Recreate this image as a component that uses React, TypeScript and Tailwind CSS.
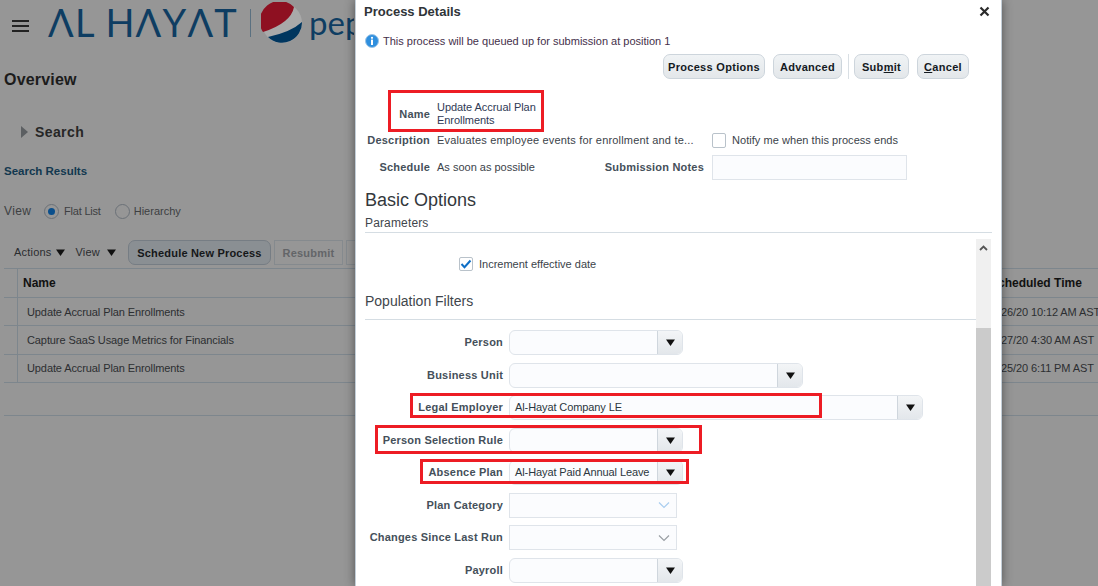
import React from "react";

const rows = [
  { name: "Update Accrual Plan Enrollments", time: "5/26/20 10:12 AM AST", h: "h-[28px]", lead: "leading-[28px]" },
  { name: "Capture SaaS Usage Metrics for Financials", time: "5/27/20 4:30 AM AST", h: "h-[29px]", lead: "leading-[28px]" },
  { name: "Update Accrual Plan Enrollments", time: "5/25/20 6:11 PM AST", h: "h-[28px]", lead: "leading-[26px]" },
];

const Arrow = () => (
  <svg width="9" height="7" viewBox="0 0 9 7" className="shrink-0">
    <path d="M0 0.5h9L4.5 7z" fill="#111" />
  </svg>
);

const Chevron = ({ color }: { color: string }) => (
  <svg width="12" height="8" viewBox="0 0 12 8" className="shrink-0">
    <path d="M1 1.5l5 5 5-5" fill="none" stroke={color} strokeWidth="1.2" />
  </svg>
);

const Dropdown = ({ label, value, width }: { label: string; value?: string; width: string }) => (
  <div className="flex items-center gap-[6px] h-[25px]">
    <span className="w-[138px] text-right font-bold text-[#45505a] tracking-[0.2px]">{label}</span>
    <div className={`flex h-[25px] ${width} border border-[#dfe4ea] rounded-[6px] bg-[#fbfcfe] overflow-hidden`}>
      <span className="flex-1 pl-[5px] leading-[23px] text-[#2b3740] tracking-[-0.1px] whitespace-nowrap">{value}</span>
      <span className="flex items-center justify-center w-[25px] border-l border-[#cfd6dd] bg-gradient-to-b from-[#f3f5f7] to-[#e3e7eb]">
        <Arrow />
      </span>
    </div>
  </div>
);

const PlainSelect = ({ label, color }: { label: string; color: string }) => (
  <div className="flex items-center gap-[6px] h-[25px]">
    <span className="w-[138px] text-right font-bold text-[#45505a] tracking-[0.2px] whitespace-nowrap">{label}</span>
    <div className="flex items-center justify-end pr-[6px] h-[25px] w-[168px] border border-[#dfe4ea] bg-[#fbfcfe]">
      <Chevron color={color} />
    </div>
  </div>
);

const ActionButton = ({ children, width }: { children: React.ReactNode; width: string }) => (
  <button className={`h-[25px] pt-[1px] ${width} rounded-[7px] border border-[#cdd5dc] bg-gradient-to-b from-[#f0f3f5] to-[#e3e7ea] font-bold text-[#141a1f] tracking-[0.3px] whitespace-nowrap`}>
    {children}
  </button>
);

export default function App() {
  return (
    <div className="relative w-[1098px] h-[586px] overflow-hidden bg-[#969696] font-['Liberation_Sans',Arial,sans-serif] text-[11px]">
      {/* page behind the dialog */}
      <main className="flex flex-col w-full h-full">
        <header className="flex items-center h-[46px] shrink-0">
          <div className="flex flex-col gap-[3px] mt-[6px] ml-[12px] w-[17px]">
            <span className="h-[2px] bg-[#222]"></span>
            <span className="h-[2px] bg-[#222]"></span>
            <span className="h-[2px] bg-[#222]"></span>
          </div>
          <span className="ml-[19px] mb-[2px] w-[192px] font-['Lato',sans-serif] text-[38px] leading-none tracking-[1.2px] text-[#0e3d62] whitespace-nowrap">
            ΛL HΛYΛT
          </span>
          <span className="ml-[10px] w-px h-[28px] bg-[#5a7080]"></span>
          <svg width="42" height="42" viewBox="0 0 42 42" className="ml-[10px] shrink-0">
            <circle cx="21" cy="21" r="20" fill="#a9a9a9" />
            <path d="M2 30A20 20 0 0 1 33 5Q30 21 2 30z" fill="#8e1021" />
            <path d="M7 35A20 20 0 0 0 41 20Q30 30 7 35z" fill="#00365f" />
          </svg>
          <div className="ml-[6px] w-[45px] overflow-hidden">
            <span className="font-['Lato',sans-serif] text-[33px] leading-none text-[#0e3d62]">pep</span>
          </div>
        </header>

        <h1 className="mt-[23px] ml-[4px] h-[22px] text-[16px] leading-[22px] font-bold text-[#1c1c1c] tracking-[0.2px]">Overview</h1>

        <div className="flex items-center mt-[31px] ml-[21px] h-[20px]">
          <svg width="7" height="12" viewBox="0 0 7 12">
            <path d="M0 0l7 6-7 6z" fill="#5c5f62" />
          </svg>
          <span className="ml-[7px] text-[14px] font-bold text-[#262626] tracking-[0.4px]">Search</span>
        </div>

        <h2 className="mt-[21px] ml-[4px] h-[16px] leading-[16px] font-bold text-[#12384f] text-[11.5px]">Search Results</h2>

        <div className="flex items-center mt-[24px] ml-[4px] h-[16px] text-[#3d3f42]">
          <span className="w-[28px] text-[12px] tracking-[0.4px]">View</span>
          <span className="flex items-center justify-center ml-[12px] w-[15px] h-[15px] rounded-full border border-[#6b7178]">
            <span className="w-[7px] h-[7px] rounded-full bg-[#0a4f8c]"></span>
          </span>
          <span className="ml-[5px] tracking-[-0.2px]">Flat List</span>
          <span className="ml-[14px] w-[15px] h-[15px] rounded-full border border-[#6b7178]"></span>
          <span className="ml-[4px]">Hierarchy</span>
        </div>

        <div className="flex items-center mt-[21px] ml-[14px] h-[25px] text-[#2a2c2f] tracking-[0.2px]">
          <span>Actions</span>
          <span className="ml-[5px]"><Arrow /></span>
          <span className="ml-[10px]">View</span>
          <span className="ml-[7px]"><Arrow /></span>
          <span className="flex items-center justify-center pt-[1px] ml-[12px] w-[143px] h-[25px] rounded-[7px] border border-[#767d84] bg-[#8a8f93] font-bold text-[#151719]">Schedule New Process</span>
          <span className="flex items-center justify-center pt-[1px] ml-[3px] w-[69px] h-[25px] border border-[#858a8e] font-bold text-[#636568]">Resubmit</span>
          <span className="ml-[3px] w-[20px] h-[25px] border border-[#858a8e]"></span>
        </div>

        {/* results table */}
        <div className="mt-[3px] ml-[4px] border-t border-[#7d868d]">
          <div className="flex h-[29px] border-b border-[#7d868d] text-[12px] font-bold text-[#111]">
            <span className="w-[14px] shrink-0 border-r border-[#7d868d]"></span>
            <span className="w-[972px] shrink-0 pl-[5px] leading-[28px]">Name</span>
            <span className="leading-[28px] whitespace-nowrap">Scheduled Time</span>
          </div>
          {rows.map((row) => (
            <div key={row.time} className={`flex ${row.h} ${row.lead} border-b border-[#7d868d] text-[#2c2e31] tracking-[-0.1px]`}>
              <span className="w-[14px] shrink-0 border-r border-[#7d868d]"></span>
              <span className="w-[974px] shrink-0 pl-[9px]">{row.name}</span>
              <span className="whitespace-nowrap">{row.time}</span>
            </div>
          ))}
        </div>
        <div className="mt-[32px] ml-[4px] border-t border-[#7d868d]"></div>
      </main>

      {/* Process Details dialog */}
      <section className="absolute left-[355px] top-0 flex flex-col w-[647px] h-[586px] pl-[9px] pr-[9px] bg-white border-x border-[#c3ced8] shadow-[0_0_10px_rgba(0,0,0,0.45)] text-[#3b434a]">
        <div className="flex items-center justify-between h-[23px] shrink-0">
          <h2 className="-ml-px text-[13px] font-bold text-[#2f3438]">Process Details</h2>
          <svg width="11" height="11" viewBox="0 0 11 11" className="mr-[2px]">
            <path d="M1.5 1.5l8 8M9.5 1.5l-8 8" stroke="#2a2a2a" strokeWidth="2.2" />
          </svg>
        </div>

        <div className="flex items-center mt-[10px] h-[16px] shrink-0">
          <svg width="14" height="14" viewBox="0 0 14 14" className="shrink-0">
            <circle cx="7" cy="7" r="6.5" fill="#2f8fde" stroke="#9cc4e6" />
            <circle cx="7" cy="3.8" r="1.1" fill="#fff" />
            <rect x="6" y="5.6" width="2" height="5.4" fill="#fff" />
          </svg>
          <span className="ml-[4px] text-[#44304a]">This process will be queued up for submission at position 1</span>
        </div>

        <div className="flex justify-end items-center mt-[5px] mr-[23px] h-[25px] shrink-0">
          <ActionButton width="w-[102px]">Process Options</ActionButton>
          <span className="ml-[8px]"><ActionButton width="w-[69px]">Advanced</ActionButton></span>
          <span className="ml-[6px] mr-[5px] w-px h-[25px] bg-[#d9dfe4]"></span>
          <ActionButton width="w-[55px]">
            Sub<span className="underline">m</span>it
          </ActionButton>
          <span className="ml-[8px]">
            <ActionButton width="w-[52px]">
              <span className="underline">C</span>ancel
            </ActionButton>
          </span>
        </div>

        {/* summary */}
        <div className="flex items-center mt-[22px] h-[26px] shrink-0">
          <span className="w-[65px] text-right font-bold text-[#45505a] tracking-[0.2px]">Name</span>
          <span className="ml-[7px] w-[120px] leading-[13px] text-[#2f3a55] tracking-[-0.05px]">Update Accrual Plan Enrollments</span>
        </div>
        <div className="flex items-center mt-[6px] h-[15px] shrink-0">
          <span className="w-[65px] text-right font-bold text-[#45505a] tracking-[0.2px]">Description</span>
          <span className="ml-[7px] w-[275px] tracking-[0.18px] whitespace-nowrap">Evaluates employee events for enrollment and te...</span>
          <span className="w-[14px] h-[15px] rounded-[2px] border border-[#b9c2ca]"></span>
          <span className="ml-[6px] tracking-[0.05px]">Notify me when this process ends</span>
        </div>
        <div className="flex items-center mt-[7px] h-[25px] shrink-0">
          <span className="w-[65px] text-right font-bold text-[#45505a] tracking-[0.2px]">Schedule</span>
          <span className="ml-[7px] w-[160px]">As soon as possible</span>
          <span className="w-[107px] text-right font-bold text-[#45505a] tracking-[0.2px] whitespace-nowrap">Submission Notes</span>
          <span className="ml-[8px] w-[195px] h-[25px] border border-[#dfe4ea] bg-[#fbfcfe]"></span>
        </div>

        <h3 className="mt-[8px] h-[24px] text-[18px] leading-[24px] text-[#33383c] shrink-0">Basic Options</h3>
        <div className="mt-[3px] h-[18px] pb-[1px] border-b border-[#d5dde3] text-[12px] leading-[16px] tracking-[0.15px] text-[#3f464c] shrink-0">Parameters</div>

        {/* scrolling parameters */}
        <div className="flex flex-1 mt-[6px] min-h-0 overflow-hidden">
          <div className="w-[611px] shrink-0">
            <div className="flex items-center mt-[18px] ml-[94px] h-[14px]">
              <span className="flex items-center justify-center w-[14px] h-[14px] rounded-[2px] border border-[#b9c2ca]">
                <svg width="12" height="10" viewBox="0 0 12 10">
                  <path d="M1.5 5l3 3.2L10.5 1.5" fill="none" stroke="#0f6fc6" strokeWidth="2" />
                </svg>
              </span>
              <span className="ml-[6px]">Increment effective date</span>
            </div>
            <div className="mt-[20px] h-[29px] pb-[8px] border-b border-[#d5dde3] text-[14px] leading-[20px] text-[#3f464c]">Population Filters</div>
            <div className="flex flex-col gap-[7.5px] mt-[10px]">
              <Dropdown label="Person" width="w-[174px]" />
              <Dropdown label="Business Unit" width="w-[294px]" />
              <Dropdown label="Legal Employer" value="Al-Hayat Company LE" width="w-[414px]" />
              <Dropdown label="Person Selection Rule" width="w-[174px]" />
              <Dropdown label="Absence Plan" value="Al-Hayat Paid Annual Leave" width="w-[174px]" />
              <PlainSelect label="Plan Category" color="#a9cdef" />
              <PlainSelect label="Changes Since Last Run" color="#9a9fa4" />
              <Dropdown label="Payroll" width="w-[174px]" />
            </div>
          </div>
          <div className="flex flex-col w-[15px] shrink-0 bg-[#f0f0f0]">
            <div className="flex justify-center pt-[6px] h-[89px]">
              <svg width="9" height="6" viewBox="0 0 9 6">
                <path d="M1 5l3.5-3.5L8 5" fill="none" stroke="#555" strokeWidth="1.8" />
              </svg>
            </div>
            <div className="flex-1 bg-[#cbcbcb]"></div>
          </div>
        </div>

        {/* review markers drawn on the screenshot */}
        <div className="absolute left-[32px] top-[90px] w-[156px] h-[42px] border-[3px] border-[#ed1c24]"></div>
        <div className="absolute left-[54px] top-[393px] w-[412px] h-[25px] border-[3px] border-[#ed1c24]"></div>
        <div className="absolute left-[19px] top-[425px] w-[327px] h-[29px] border-[3px] border-[#ed1c24]"></div>
        <div className="absolute left-[64px] top-[459px] w-[269px] h-[25px] border-[3px] border-[#ed1c24]"></div>
      </section>
    </div>
  );
}
